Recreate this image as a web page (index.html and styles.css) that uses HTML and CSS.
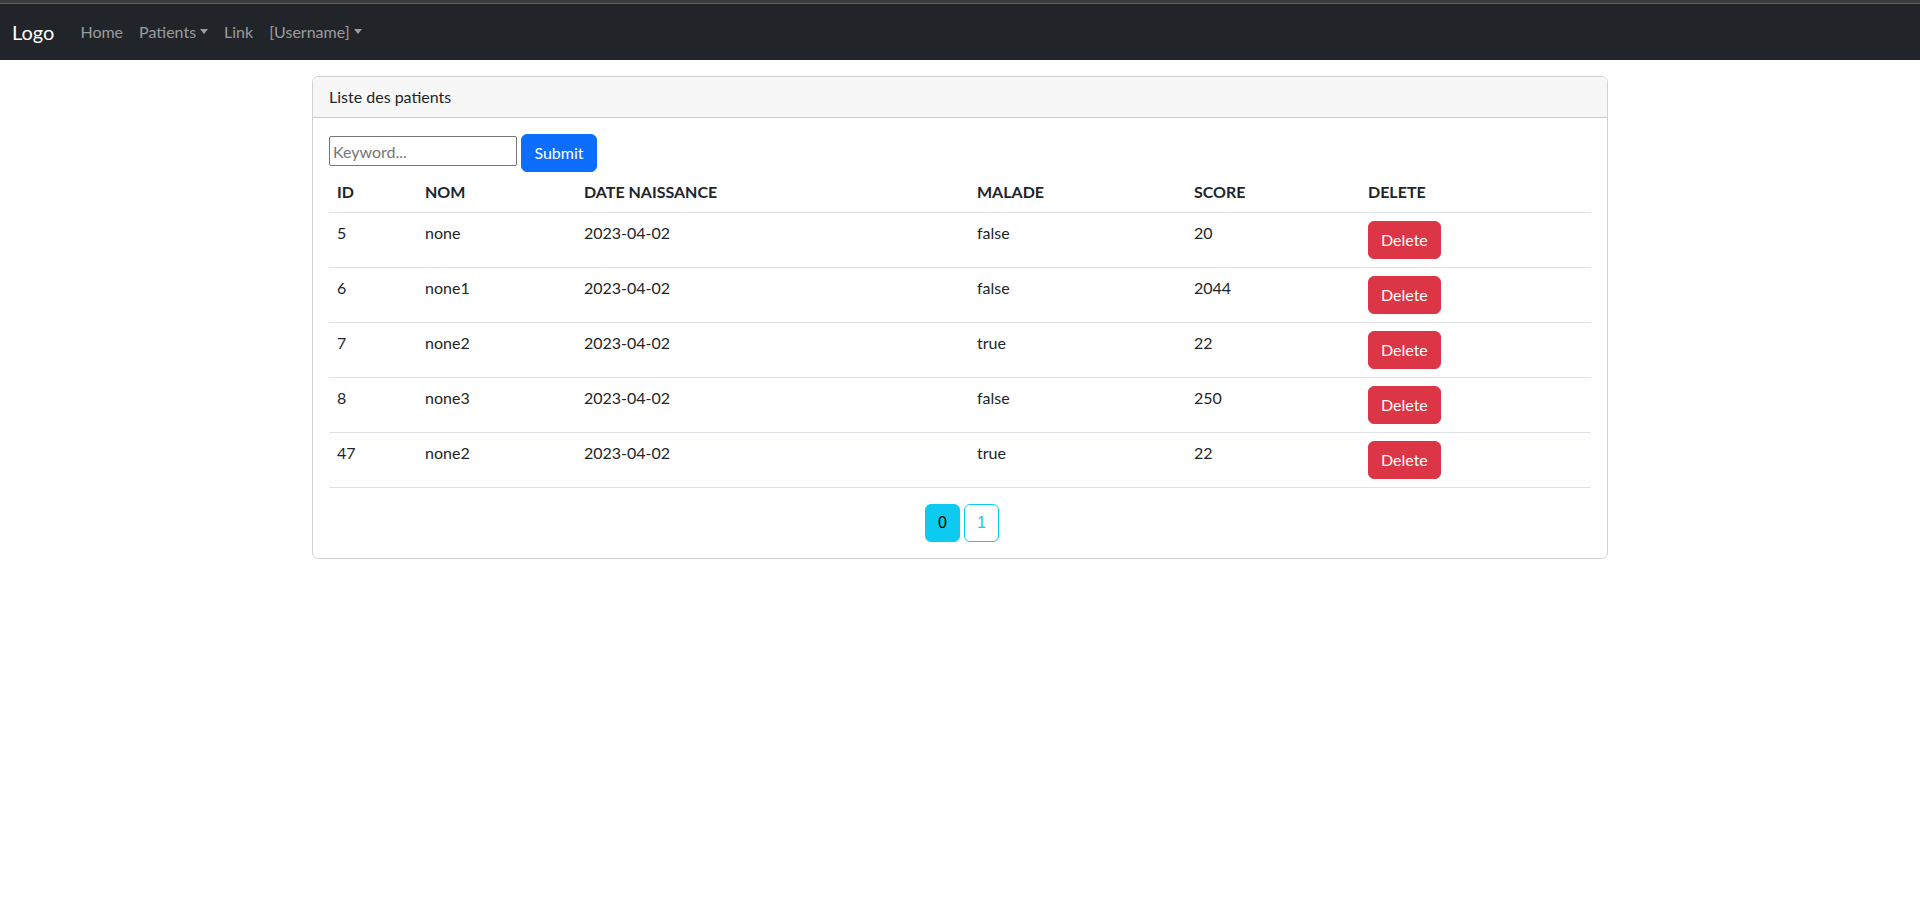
FILE: index.html
```html
<!DOCTYPE html>
<html lang="fr">
<head>
<meta charset="utf-8">
<title>Patients</title>
<link rel="stylesheet" href="styles.css">
</head>
<body>
<div class="topline"></div>
<nav class="navbar">
  <a class="brand" href="#">Logo</a>
  <ul class="nav">
    <li><a class="nav-link" href="#">Home</a></li>
    <li><a class="nav-link dropdown" href="#">Patients</a></li>
    <li><a class="nav-link" href="#">Link</a></li>
    <li><a class="nav-link dropdown" href="#">[Username]</a></li>
  </ul>
</nav>
<main class="container">
  <div class="card">
    <div class="card-header">Liste des patients</div>
    <div class="card-body">
      <form class="search">
        <input class="keyword" type="text" placeholder="Keyword...">
        <button class="btn btn-primary" type="button">Submit</button>
      </form>
      <table class="table">
        <thead>
          <tr>
            <th class="c-id">ID</th>
            <th class="c-nom">NOM</th>
            <th class="c-date">DATE NAISSANCE</th>
            <th class="c-malade">MALADE</th>
            <th class="c-score">SCORE</th>
            <th class="c-del">DELETE</th>
          </tr>
        </thead>
        <tbody>
          <tr><td>5</td><td>none</td><td>2023-04-02</td><td>false</td><td>20</td><td><button class="btn btn-danger" type="button">Delete</button></td></tr>
          <tr><td>6</td><td>none1</td><td>2023-04-02</td><td>false</td><td>2044</td><td><button class="btn btn-danger" type="button">Delete</button></td></tr>
          <tr><td>7</td><td>none2</td><td>2023-04-02</td><td>true</td><td>22</td><td><button class="btn btn-danger" type="button">Delete</button></td></tr>
          <tr><td>8</td><td>none3</td><td>2023-04-02</td><td>false</td><td>250</td><td><button class="btn btn-danger" type="button">Delete</button></td></tr>
          <tr><td>47</td><td>none2</td><td>2023-04-02</td><td>true</td><td>22</td><td><button class="btn btn-danger" type="button">Delete</button></td></tr>
        </tbody>
      </table>
      <div class="pages">
        <a class="page page-active" href="#">0</a>
        <a class="page page-outline" href="#">1</a>
      </div>
    </div>
  </div>
</main>
</body>
</html>
```

FILE: styles.css
```css
* { box-sizing: border-box; }
html, body { margin: 0; padding: 0; }
body {
  font-family: "Lato", "Noto Sans", sans-serif;
  font-size: 16px;
  line-height: 24px;
  color: #212529;
  background: #fff;
}
a { text-decoration: none; }

.topline {
  height: 4px;
  background: #3a3b3d;
  border-bottom: 1px solid #5f6063;
}

.navbar {
  height: 56px;
  background: #212529;
  display: flex;
  align-items: center;
  padding: 8px 12px;
}
.brand {
  color: #fff;
  font-size: 20px;
  line-height: 30px;
  padding: 5px 0;
  margin-right: 18px;
}
.nav {
  list-style: none;
  margin: 0;
  padding: 0;
  display: flex;
}
.nav-link {
  display: block;
  padding: 8px;
  color: rgba(255, 255, 255, 0.55);
  font-size: 16px;
  line-height: 24px;
}
.dropdown::after {
  content: "";
  display: inline-block;
  margin-left: 4px;
  vertical-align: 4px;
  border-top: 5px solid;
  border-left: 4px solid transparent;
  border-right: 4px solid transparent;
}

.container {
  width: 1320px;
  margin: 16px auto 0;
  padding: 0 12px;
}
.card {
  border: 1px solid rgba(0, 0, 0, 0.175);
  border-radius: 6px;
  overflow: hidden;
}
.card-header {
  background: #f7f7f7;
  padding: 8px 16px;
  border-bottom: 1px solid rgba(0, 0, 0, 0.175);
}
.card-body { padding: 16px; }

.search {
  display: flex;
  align-items: flex-start;
  gap: 4px;
  margin: 0;
}
.keyword {
  width: 188px;
  height: 30px;
  margin-top: 2px;
  padding: 1px 3px;
  font-family: inherit;
  font-size: 16px;
  border: 1px solid #767676;
  border-radius: 2px;
  color: #212529;
}
.keyword::placeholder { color: #757575; }

.btn {
  display: inline-block;
  font-family: inherit;
  font-size: 16px;
  line-height: 24px;
  padding: 6px 12px;
  border: 1px solid transparent;
  border-radius: 6px;
  color: #fff;
  cursor: pointer;
}
.btn-primary { background: #0d6efd; border-color: #0d6efd; min-width: 76px; }
.btn-danger { background: #dc3545; border-color: #dc3545; min-width: 72px; }

.table {
  width: 100%;
  border-collapse: collapse;
  margin-bottom: 16px;
  vertical-align: top;
}
.table th, .table td {
  padding: 8px;
  text-align: left;
  border-bottom: 1px solid #dee2e6;
  vertical-align: top;
}
.table th { font-weight: 700; }
.c-id { width: 88px; }
.c-nom { width: 159px; }
.c-date { width: 393px; }
.c-malade { width: 217px; }
.c-score { width: 174px; }

.pages {
  text-align: center;
  font-size: 0;
  padding-left: 4px;
}
.page {
  display: inline-block;
  width: 35px;
  height: 38px;
  margin: 0 2px;
  border-radius: 6px;
  border: 1px solid #0dcaf0;
  font-family: "Liberation Sans", Arial, sans-serif;
  font-size: 16px;
  line-height: 36px;
  text-align: center;
}
.page-active { background: #0dcaf0; color: #000; }
.page-outline { background: #fff; color: #0dcaf0; }
```
